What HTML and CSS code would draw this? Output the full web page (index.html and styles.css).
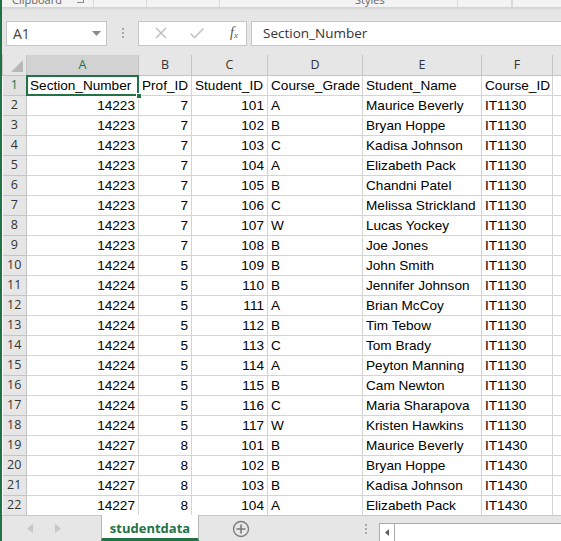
FILE: index.html
```html
<!DOCTYPE html>
<html lang="en">

<head>
     <meta charset="UTF-8">
     <meta name="viewport" content="width=device-width, initial-scale=1.0">
     <title>studentdata - Excel</title>
     <link rel="stylesheet" href="styles.css">
</head>

<body>
     <div class="app">
          <!-- bas du ruban -->
          <div class="ribbon">
               <div class="group g-clipboard"><span>Clipboard</span><i class="launcher"></i></div>
               <div class="group g-2"></div>
               <div class="group g-3"></div>
               <div class="group g-styles"><span>Styles</span></div>
               <div class="group g-5"></div>
               <div class="group"></div>
          </div>

          <!-- barre de formule -->
          <div class="formula-bar">
               <div class="name-box">
                    <span>A1</span>
                    <svg class="caret" width="9" height="5" viewBox="0 0 9 5"><path d="M0 0h9L4.5 5z" fill="#8a8a8a"/></svg>
               </div>
               <div class="grip"><i></i><i></i><i></i></div>
               <div class="fx-box">
                    <svg width="14" height="14" viewBox="0 0 14 14"><path d="M2 2l10 10M12 2L2 12" stroke="#bdbdbd" stroke-width="1.4" fill="none"/></svg>
                    <svg width="16" height="14" viewBox="0 0 16 14"><path d="M1.5 7.5l4 4L14.5 2.5" stroke="#c4c4c4" stroke-width="1.6" fill="none"/></svg>
                    <span class="fx">f<sub>x</sub></span>
               </div>
               <div class="formula-input">Section_Number</div>
          </div>

          <!-- feuille -->
          <div class="sheet">
               <table class="grid">
                    <colgroup>
                         <col class="c-row">
                         <col class="c-a">
                         <col class="c-b">
                         <col class="c-c">
                         <col class="c-d">
                         <col class="c-e">
                         <col class="c-f">
                         <col class="c-g">
                    </colgroup>
                    <thead>
                         <tr>
                              <th class="corner"><i></i></th>
                              <th class="active">A</th>
                              <th>B</th>
                              <th>C</th>
                              <th>D</th>
                              <th>E</th>
                              <th>F</th>
                              <th></th>
                         </tr>
                    </thead>
                    <tbody>
                         <tr><th class="active">1</th><td class="selected">Section_Number</td><td>Prof_ID</td><td>Student_ID</td><td>Course_Grade</td><td>Student_Name</td><td>Course_ID</td><td></td></tr>
                         <tr><th>2</th><td class="num">14223</td><td class="num">7</td><td class="num">101</td><td>A</td><td>Maurice Beverly</td><td>IT1130</td><td></td></tr>
                         <tr><th>3</th><td class="num">14223</td><td class="num">7</td><td class="num">102</td><td>B</td><td>Bryan Hoppe</td><td>IT1130</td><td></td></tr>
                         <tr><th>4</th><td class="num">14223</td><td class="num">7</td><td class="num">103</td><td>C</td><td>Kadisa Johnson</td><td>IT1130</td><td></td></tr>
                         <tr><th>5</th><td class="num">14223</td><td class="num">7</td><td class="num">104</td><td>A</td><td>Elizabeth Pack</td><td>IT1130</td><td></td></tr>
                         <tr><th>6</th><td class="num">14223</td><td class="num">7</td><td class="num">105</td><td>B</td><td>Chandni Patel</td><td>IT1130</td><td></td></tr>
                         <tr><th>7</th><td class="num">14223</td><td class="num">7</td><td class="num">106</td><td>C</td><td>Melissa Strickland</td><td>IT1130</td><td></td></tr>
                         <tr><th>8</th><td class="num">14223</td><td class="num">7</td><td class="num">107</td><td>W</td><td>Lucas Yockey</td><td>IT1130</td><td></td></tr>
                         <tr><th>9</th><td class="num">14223</td><td class="num">7</td><td class="num">108</td><td>B</td><td>Joe Jones</td><td>IT1130</td><td></td></tr>
                         <tr><th>10</th><td class="num">14224</td><td class="num">5</td><td class="num">109</td><td>B</td><td>John Smith</td><td>IT1130</td><td></td></tr>
                         <tr><th>11</th><td class="num">14224</td><td class="num">5</td><td class="num">110</td><td>B</td><td>Jennifer Johnson</td><td>IT1130</td><td></td></tr>
                         <tr><th>12</th><td class="num">14224</td><td class="num">5</td><td class="num">111</td><td>A</td><td>Brian McCoy</td><td>IT1130</td><td></td></tr>
                         <tr><th>13</th><td class="num">14224</td><td class="num">5</td><td class="num">112</td><td>B</td><td>Tim Tebow</td><td>IT1130</td><td></td></tr>
                         <tr><th>14</th><td class="num">14224</td><td class="num">5</td><td class="num">113</td><td>C</td><td>Tom Brady</td><td>IT1130</td><td></td></tr>
                         <tr><th>15</th><td class="num">14224</td><td class="num">5</td><td class="num">114</td><td>A</td><td>Peyton Manning</td><td>IT1130</td><td></td></tr>
                         <tr><th>16</th><td class="num">14224</td><td class="num">5</td><td class="num">115</td><td>B</td><td>Cam Newton</td><td>IT1130</td><td></td></tr>
                         <tr><th>17</th><td class="num">14224</td><td class="num">5</td><td class="num">116</td><td>C</td><td>Maria Sharapova</td><td>IT1130</td><td></td></tr>
                         <tr><th>18</th><td class="num">14224</td><td class="num">5</td><td class="num">117</td><td>W</td><td>Kristen Hawkins</td><td>IT1130</td><td></td></tr>
                         <tr><th>19</th><td class="num">14227</td><td class="num">8</td><td class="num">101</td><td>B</td><td>Maurice Beverly</td><td>IT1430</td><td></td></tr>
                         <tr><th>20</th><td class="num">14227</td><td class="num">8</td><td class="num">102</td><td>B</td><td>Bryan Hoppe</td><td>IT1430</td><td></td></tr>
                         <tr><th>21</th><td class="num">14227</td><td class="num">8</td><td class="num">103</td><td>B</td><td>Kadisa Johnson</td><td>IT1430</td><td></td></tr>
                         <tr><th>22</th><td class="num">14227</td><td class="num">8</td><td class="num">104</td><td>A</td><td>Elizabeth Pack</td><td>IT1430</td><td></td></tr>
                    </tbody>
               </table>
          </div>

          <!-- onglets -->
          <div class="tabs">
               <div class="tab-nav">
                    <svg width="6" height="9" viewBox="0 0 6 9"><path d="M6 0v9L0 4.5z" fill="#c6c6c6"/></svg>
                    <svg width="6" height="9" viewBox="0 0 6 9"><path d="M0 0v9l6-4.5z" fill="#c6c6c6"/></svg>
               </div>
               <div class="tab active">studentdata</div>
               <div class="add-sheet">
                    <svg width="18" height="18" viewBox="0 0 18 18"><circle cx="9" cy="9" r="7.5" stroke="#7a7a7a" stroke-width="1.3" fill="none"/><path d="M9 4.5v9M4.5 9h9" stroke="#7a7a7a" stroke-width="1.6"/></svg>
               </div>
               <div class="grip tab-grip"><i></i><i></i><i></i></div>
               <div class="hscroll">
                    <div class="hscroll-btn"><svg width="4" height="7" viewBox="0 0 4 7"><path d="M4 0v7L0 3.5z" fill="#606060"/></svg></div>
                    <div class="hscroll-track"></div>
               </div>
          </div>
     </div>
</body>

</html>
```

FILE: styles.css
```css
:root {
     --GREEN-color: #217346;
     --GRID-color: #d4d4d4;
     --HEADER-BACKGROUND-color: #e6e6e6;
     --HEADER-ACTIVE-BACKGROUND-color: #d2d2d2;
     --HEADER-BORDER-color: #c4c4c4;
     --CHROME-color: #e6e6e6;
     --RIBBON-color: #f3f3f3;
     --UI-FONT: 'Open Sans', 'Noto Sans', sans-serif;
     --CELL-FONT: 'Liberation Sans', Arial, sans-serif;
}

/** Généralités **/
* {
     margin: 0;
     padding: 0;
}

*,
*::before,
*::after {
     box-sizing: border-box;
}

body {
     width: 561px;
     height: 541px;
     overflow: hidden;
     background: #fff;
     font-family: var(--UI-FONT);
}

.app {
     display: flex;
     flex-direction: column;
     height: 541px;
     border-left: 2px solid var(--GREEN-color);
     background: var(--CHROME-color);
}

/** ruban **/
.ribbon {
     display: flex;
     height: 8px;
     flex: none;
     overflow: hidden;
     background: var(--RIBBON-color);
     border-bottom: 1px solid #d5d5d5;
     box-shadow: 0 1px 2px rgba(0, 0, 0, .08);
}

.group {
     position: relative;
     border-right: 1px solid #d9d9d9;
     height: 7px;
     font-size: 11px;
     color: #666;
}
.group span {
     display: block;
     line-height: 12px;
     margin-top: -6px;
}
.g-clipboard {
     width: 92px;
     padding-left: 10px;
}
.launcher {
     position: absolute;
     right: 9px;
     top: -4px;
     width: 7px;
     height: 7px;
     border-right: 1px solid #8a8a8a;
     border-bottom: 1px solid #8a8a8a;
}
.g-2 { width: 53px; }
.g-3 { width: 73px; }
.g-styles {
     width: 238px;
     padding-left: 135px;
}
.g-5 { width: 54px; }

/** barre de formule **/
.formula-bar {
     display: flex;
     align-items: center;
     height: 47px;
     flex: none;
     padding: 3px 0 0 4px;
}

.name-box {
     display: flex;
     align-items: center;
     justify-content: space-between;
     width: 101px;
     height: 25px;
     padding: 0 5px 0 6px;
     background: #fff;
     border: 1px solid #c6c6c6;
     font-size: 14px;
     color: #444;
}

.grip {
     display: flex;
     flex-direction: column;
     gap: 2px;
     margin: 0 14px 0 15px;
}
.grip i {
     display: block;
     width: 2px;
     height: 2px;
     background: #a8a8a8;
}

.fx-box {
     display: flex;
     align-items: center;
     width: 109px;
     height: 25px;
     padding: 0 8px 0 15px;
     gap: 21px;
     background: #fff;
     border: 1px solid #c6c6c6;
}
.fx {
     margin-left: 4px;
     font-family: 'Liberation Serif', serif;
     font-style: italic;
     font-size: 14px;
     color: #555;
}
.fx sub {
     font-size: 9px;
     vertical-align: -1px;
}

.formula-input {
     flex: 1;
     height: 25px;
     margin-left: 4px;
     padding-left: 11px;
     background: #fff;
     border: 1px solid #c6c6c6;
     border-right: 0;
     font-size: 13.5px;
     line-height: 23px;
     color: #333;
}

/** feuille **/
.sheet {
     flex: 1;
     overflow: hidden;
     background: #fff;
}

.grid {
     table-layout: fixed;
     width: 610px;
     border-collapse: collapse;
}
.c-row { width: 24px; }
.c-a { width: 112px; }
.c-b { width: 53px; }
.c-c { width: 76px; }
.c-d { width: 95px; }
.c-e { width: 119px; }
.c-f { width: 71px; }
.c-g { width: 60px; }

.grid tr {
     height: 20px;
}

.grid th {
     background: var(--HEADER-BACKGROUND-color);
     border: 1px solid var(--HEADER-BORDER-color);
     font-family: var(--UI-FONT);
     font-weight: 400;
     font-size: 12.5px;
     color: #333;
     text-align: center;
     padding: 0;
     line-height: 18px;
}
.grid thead th {
     border-top: 0;
}
.grid tbody th {
     border-left: 0;
}
.grid thead th.active {
     background: var(--HEADER-ACTIVE-BACKGROUND-color);
     color: var(--GREEN-color);
}
.grid tbody th.active {
     background: #e1e1e1;
     color: var(--GREEN-color);
}

.corner {
     position: relative;
}
.corner i {
     position: absolute;
     right: 3px;
     bottom: 3px;
     width: 0;
     height: 0;
     border-left: 12px solid transparent;
     border-bottom: 12px solid #b8b8b8;
}

.grid td {
     border: 1px solid var(--GRID-color);
     font-family: var(--CELL-FONT);
     font-size: 13.6px;
     color: #000;
     padding: 1px 3px 0;
     white-space: nowrap;
     overflow: hidden;
     line-height: 18px;
}
.grid td.num {
     text-align: right;
}
.grid td.selected {
     position: relative;
     overflow: visible;
}
.grid td.selected::before {
     content: "";
     position: absolute;
     inset: -1px;
     border: 2px solid var(--GREEN-color);
}
.grid td.selected::after {
     content: "";
     position: absolute;
     right: -4px;
     bottom: -4px;
     width: 6px;
     height: 6px;
     background: var(--GREEN-color);
     border: 1px solid #fff;
}

/** onglets **/
.tabs {
     display: flex;
     align-items: stretch;
     height: 26px;
     flex: none;
     border-top: 1px solid #c8c8c8;
     background: var(--CHROME-color);
}

.tab-nav {
     display: flex;
     align-items: center;
     gap: 22px;
     width: 99px;
     padding-left: 25px;
}

.tab {
     width: 98px;
     margin-top: -1px;
     padding-top: 4px;
     background: #fff;
     border-left: 1px solid #b8b8b8;
     border-right: 1px solid #b8b8b8;
     border-bottom: 3px solid var(--GREEN-color);
     font-size: 13px;
     font-weight: 700;
     color: var(--GREEN-color);
     text-align: center;
}

.add-sheet {
     display: flex;
     align-items: center;
     padding-left: 33px;
}

.tab-grip {
     justify-content: center;
     margin: 0 12px 0 115px;
}

.hscroll {
     flex: 1;
     display: flex;
     margin-top: 7px;
     border: 1px solid #ababab;
     border-right: 0;
     border-bottom: 0;
     background: #fff;
}
.hscroll-btn {
     display: flex;
     align-items: center;
     justify-content: center;
     width: 15px;
     border-right: 1px solid #ababab;
}
```
